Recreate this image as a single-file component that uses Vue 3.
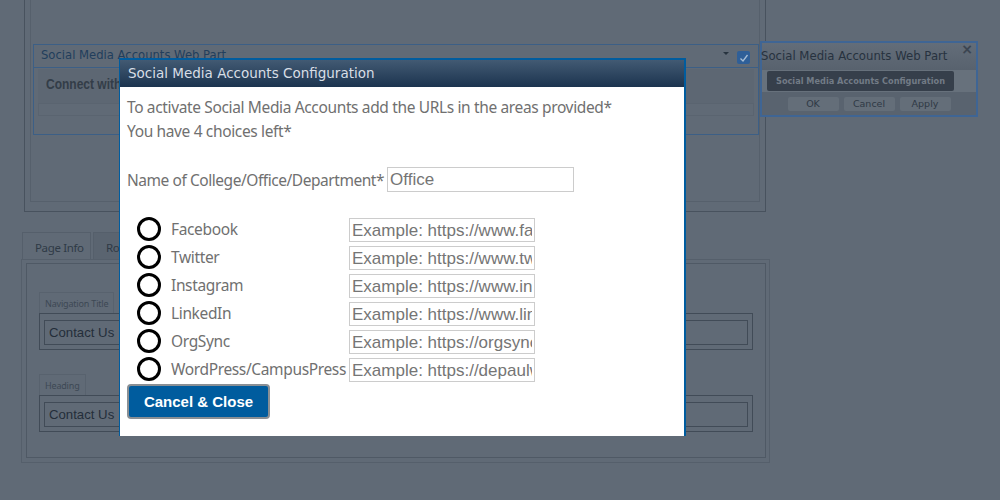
<script setup>
const networks = [
  { name: 'Facebook', url: 'https://www.facebook.com' },
  { name: 'Twitter', url: 'https://www.twitter.com' },
  { name: 'Instagram', url: 'https://www.instagram.com' },
  { name: 'LinkedIn', url: 'https://www.linkedin.com' },
  { name: 'OrgSync', url: 'https://orgsync.com' },
  { name: 'WordPress/CampusPress', url: 'https://depaulwp.com' }
]
const fields = ['Navigation Title', 'Heading']
</script>

<template>
  <div class="page">
    <section class="top-panel">
      <div class="top-inner">
        <div class="webpart">
          <div class="wp-head">
            <span>Social Media Accounts Web Part</span>
            <span class="wp-tools">
              <i class="caret"></i>
              <span class="check">
                <svg viewBox="0 0 12 12" width="12" height="12"><path d="M2.5 6.5 5 9l4.5-6" fill="none" stroke="#a9bfd6" stroke-width="1.3"/></svg>
              </span>
            </span>
          </div>
          <div class="wp-body">
            <div class="connect"><span class="connect-text">Connect with</span></div>
            <div class="wp-strip"></div>
          </div>
        </div>
      </div>
    </section>

    <section class="tabs-area">
      <div class="tabs">
        <div class="tab active">Page Info</div>
        <div class="tab">Roles</div>
      </div>
      <div class="tab-panel">
        <div class="tab-inner">
          <div v-for="f in fields" :key="f" class="field">
            <div class="field-label">{{ f }}</div>
            <div class="field-box"><div class="field-input">Contact Us</div></div>
          </div>
        </div>
      </div>
    </section>

    <div class="props">
      <div class="props-head">Social Media Accounts Web Part<span class="props-x">×</span></div>
      <div class="props-body"><div class="props-btn">Social Media Accounts Configuration</div></div>
      <div class="props-foot">
        <span class="small-btn">OK</span>
        <span class="small-btn">Cancel</span>
        <span class="small-btn">Apply</span>
      </div>
    </div>

    <div class="modal">
      <div class="modal-title">Social Media Accounts Configuration</div>
      <div class="modal-body">
        <p class="line">To activate Social Media Accounts add the URLs in the areas provided*</p>
        <p class="line">You have 4 choices left*</p>
        <div class="name-row">
          <label class="line name-label">Name of College/Office/Department*</label>
          <input class="text-input name-input" placeholder="Office" />
        </div>
        <div class="net-grid">
          <div v-for="n in networks" :key="n.name" class="net-row">
            <span class="radio"></span>
            <span class="net-name">{{ n.name }}</span>
            <input class="text-input" :placeholder="'Example: ' + n.url" />
          </div>
        </div>
        <button class="close-btn">Cancel &amp; Close</button>
      </div>
    </div>
  </div>
</template>

<style>
html, body { margin: 0; padding: 0; }
</style>

<style scoped>
.page {
  position: relative;
  width: 1000px;
  height: 500px;
  overflow: hidden;
  background: #606a76;
  font-family: "DejaVu Sans", sans-serif;
}
.top-panel {
  box-sizing: border-box;
  width: 742px;
  height: 222px;
  margin: -10px 0 0 24px;
  padding: 0 5px 9px;
  border: 1px solid #48525e;
}
.top-inner {
  box-sizing: border-box;
  height: 100%;
  padding: 52px 0 0 2px;
  border: 1px solid #56606c;
}
.webpart {
  box-sizing: border-box;
  width: 726px;
  height: 91px;
  border: 1px solid #3c5f86;
}
.wp-head {
  display: flex;
  justify-content: space-between;
  align-items: center;
  box-sizing: border-box;
  height: 23px;
  padding: 0 7px 2px;
  font-size: 11.6px;
  color: #223e5c;
  border-bottom: 1px solid #3c5f86;
}
.wp-tools { display: flex; align-items: center; gap: 8px; margin-right: 1px; }
.caret {
  width: 0; height: 0;
  margin-top: -4px;
  border-left: 3px solid transparent;
  border-right: 3px solid transparent;
  border-top: 3px solid #27333f;
}
.check {
  display: flex;
  align-items: center;
  justify-content: center;
  width: 13px;
  height: 13px;
  margin-top: 5px;
  border-radius: 2px;
  background: #2f5f98;
}
.wp-body { padding: 1px 4px 0; }
.connect {
  height: 34px;
  padding-left: 8px;
  background: #5d6773;
  font: 700 15px/30px "Liberation Sans", sans-serif;
  color: #333d48;
}
.connect-text {
  display: inline-block;
  transform: scaleX(.8);
  transform-origin: left center;
}
.wp-strip { height: 13px; border: 1px solid #5a6470; box-sizing: border-box; }

.tabs-area { margin: 20px 0 0 21px; width: 749px; }
.tabs { display: flex; gap: 2px; height: 27px; margin-left: 1px; }
.tab {
  box-sizing: border-box;
  padding: 7px 9px 0 12px;
  font: 11.5px/16px "Noto Sans", sans-serif;
  letter-spacing: -.35px;
  white-space: nowrap;
  color: #2f3a46;
  border: 1px solid #555f6b;
  border-bottom: 0;
  background: #5a6470;
}
.tab.active { width: 69px; background: #606a76; }
.tab-panel {
  box-sizing: border-box;
  height: 204px;
  padding: 3px 3px 4px 4px;
  border: 1px solid #555f6b;
}
.tab-inner {
  box-sizing: border-box;
  height: 100%;
  padding: 28px 12px 0;
  border: 1px solid #4f5965;
}
.field { margin-bottom: 24px; }
.field-label {
  display: inline-block;
  vertical-align: top;
  height: 21px;
  padding: 0 5px;
  font: 9px/21px "Noto Sans", sans-serif;
  letter-spacing: -.18px;
  color: #3d4854;
  border: 1px solid #58626e;
  border-bottom: 0;
  box-sizing: border-box;
}
.field-box {
  box-sizing: border-box;
  width: 714px;
  height: 37px;
  padding: 6px 4px;
  border: 1px solid #414b57;
}
.field-input {
  box-sizing: border-box;
  height: 25px;
  padding-left: 4px;
  font: 13.2px/23px "Liberation Sans", sans-serif;
  color: #242e3a;
  border: 1px solid #414b57;
}

.props {
  position: absolute;
  left: 760px;
  top: 41px;
  box-sizing: border-box;
  width: 218px;
  height: 76px;
  border: 2px solid #3f6594;
  background: #5f6975;
}
.props-head {
  position: relative;
  box-sizing: border-box;
  height: 27px;
  padding-left: 0;
  text-indent: -1px;
  font-size: 11.7px;
  line-height: 26px;
  color: #27323f;
  background: linear-gradient(#636d79, #58626e);
  white-space: nowrap;
}
.props-x {
  position: absolute;
  right: 3px;
  top: -7px;
  font-size: 14px;
  font-weight: 700;
  color: #3b4551;
}
.props-body {
  height: 22px;
  padding: 1px 0 0 5px;
  box-sizing: border-box;
  background: #67717c;
}
.props-btn {
  box-sizing: border-box;
  width: 187px;
  height: 20px;
  border-radius: 2px;
  background: #363f4b;
  color: #727b86;
  font: 700 8.2px/20px "DejaVu Sans", sans-serif;
  text-align: center;
  white-space: nowrap;
}
.props-foot {
  display: flex;
  justify-content: center;
  gap: 5px;
  height: 23px;
  padding: 5px 0 0;
  box-sizing: border-box;
  background: #59636f;
}
.small-btn {
  box-sizing: border-box;
  width: 51px;
  height: 14px;
  border-radius: 2px;
  background: #646e79;
  font-size: 9.5px;
  line-height: 14px;
  text-align: center;
  color: #2f3945;
}

.modal {
  position: absolute;
  left: 119px;
  top: 58px;
  box-sizing: border-box;
  width: 567px;
  height: 378px;
  background: #fff;
  border: solid #005c9e;
  border-width: 2px 2px 0 1px;
}
.modal-title {
  height: 27px;
  padding-left: 8px;
  font-size: 13.5px;
  line-height: 27px;
  color: #d8dee6;
  background: linear-gradient(#425a73, #1c344f);
}
.modal-body { padding: 8px 7px 0; }
.line {
  display: block;
  margin: 0;
  font: 15.5px/24px "Noto Sans", sans-serif;
  letter-spacing: -.36px;
  color: #707070;
}
.name-row {
  display: flex;
  align-items: center;
  gap: 0;
  margin-top: 24px;
}
.name-label { letter-spacing: -.45px; }
.text-input {
  box-sizing: border-box;
  width: 186px;
  height: 24px;
  margin: 0;
  padding: 1px 2px 0;
  border: 1px solid #ccc;
  border-radius: 0;
  outline: 0;
  background: #fff;
  font: 17px "Liberation Sans", sans-serif;
}
.text-input::placeholder { color: #757575; opacity: 1; }
.name-input { width: 187px; height: 25px; margin-left: 3px; }
.net-grid { margin-top: 24px; }
.net-row {
  display: grid;
  grid-template-columns: 44px 178px 186px;
  align-items: center;
  height: 28px;
}
.radio {
  box-sizing: border-box;
  width: 24px;
  height: 24px;
  margin: 0 0 2px 10px;
  border: 3px solid #000;
  border-radius: 50%;
}
.net-name {
  margin-bottom: 2px;
  font: 15.5px/24px "Noto Sans", sans-serif;
  letter-spacing: -.36px;
  color: #707070;
  white-space: nowrap;
}
.close-btn {
  display: block;
  box-sizing: border-box;
  width: 143px;
  height: 35px;
  margin-top: 0;
  padding: 0;
  border: 2px solid #8a8f94;
  border-radius: 4px;
  background: #005c9e;
  color: #fff;
  font: 700 15px "Liberation Sans", sans-serif;
}
</style>
